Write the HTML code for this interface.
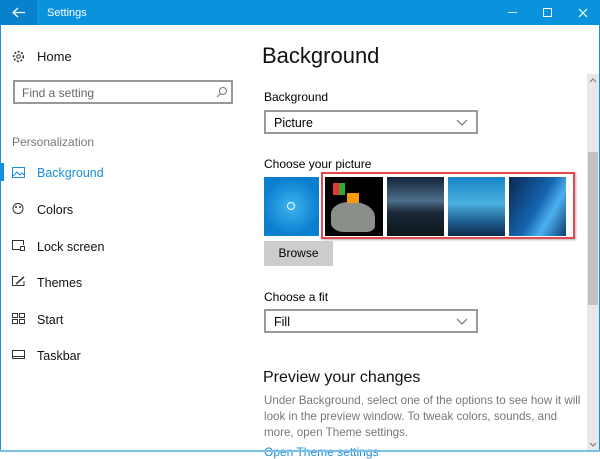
<!DOCTYPE html>
<html><head><meta charset="utf-8"><style>
*{margin:0;padding:0;box-sizing:border-box}
body{width:600px;height:452px;overflow:hidden;background:#fff;font-family:"Liberation Sans",sans-serif;position:relative;color:#000}
.a{position:absolute;white-space:nowrap}
.t{font-size:12px}
.nav{font-size:12.5px;color:#111}
.ic{position:absolute;left:12px;width:13px;height:11px}
.dd{position:absolute;border:2px solid #999;background:#fff;font-size:12.5px;padding:4px 0 0 8px}
.dd svg{position:absolute;right:8px;top:7px}
.th{position:absolute;top:177px;height:59px}
</style></head><body>
<div class="a" style="left:0;top:0;width:600px;height:25px;background:#0b92dc"></div>
<div class="a" style="left:0;top:0;width:37px;height:25px;background:#0781cc"></div>
<svg class="a" style="left:12px;top:7px" width="14" height="11"><path d="M1 5.5H13M6 1L1 5.5L6 10" stroke="#fff" stroke-width="1.3" fill="none"/></svg>
<div class="a" style="left:47px;top:7px;font-size:11px;color:#fff">Settings</div>
<div class="a" style="left:508px;top:12px;width:9px;height:1.3px;background:#cfe8f7"></div>
<div class="a" style="left:543px;top:8px;width:9px;height:9px;border:1.3px solid #fff"></div>
<svg class="a" style="left:578px;top:8px" width="10" height="10"><path d="M1 1L9 9M9 1L1 9" stroke="#fff" stroke-width="1.2"/></svg>
<div class="a" style="left:0;top:25px;width:1px;height:427px;background:#1b8fd6"></div>
<div class="a" style="left:599px;top:25px;width:1px;height:427px;background:#1b8fd6"></div>

<svg class="a" style="left:12px;top:50px" width="13" height="13"><circle cx="6.5" cy="6.5" r="4.8" stroke="#333" stroke-width="1.6" stroke-dasharray="2 1.6" fill="none"/><circle cx="6.5" cy="6.5" r="1.8" stroke="#333" fill="none"/></svg>
<div class="a nav" style="left:37px;top:49px;font-size:13px">Home</div>
<div class="a" style="left:13px;top:80px;width:220px;height:24px;border:2px solid #999"></div>
<div class="a t" style="left:22px;top:86px;color:#666">Find a setting</div>
<svg class="a" style="left:216px;top:86px" width="12" height="12"><circle cx="7" cy="5" r="3.5" stroke="#777" fill="none"/><path d="M4.5 7.5L1 11" stroke="#777"/></svg>
<div class="a t" style="left:12px;top:135px;color:#777">Personalization</div>
<div class="a" style="left:1px;top:163px;width:3px;height:18px;background:#0b92dc"></div>
<svg class="ic" style="top:167px"><rect x=".5" y=".5" width="12" height="10" stroke="#1a8fd6" fill="none"/><path d="M1 9L5 5L8 8L10 6L12 8" stroke="#1a8fd6" fill="none"/></svg>
<div class="a nav" style="left:37px;top:166px;color:#1a8fd6">Background</div>
<svg class="ic" style="top:203px"><circle cx="6" cy="5.5" r="5" stroke="#333" fill="none"/><circle cx="4" cy="4" r="1" fill="#333"/><circle cx="8" cy="4" r="1" fill="#333"/></svg>
<div class="a nav" style="left:37px;top:203px">Colors</div>
<svg class="ic" style="top:240px"><path d="M8 9.5H.5V.5H11.5V5" stroke="#333" fill="none"/><rect x="8.5" y="6.5" width="4" height="4" stroke="#333" fill="none"/></svg>
<div class="a nav" style="left:37px;top:240px">Lock screen</div>
<svg class="ic" style="top:276px"><path d="M6 .5H.5V9.5H12V5" stroke="#333" fill="none"/><path d="M4 8L12 1" stroke="#333" stroke-width="1.5"/></svg>
<div class="a nav" style="left:37px;top:276px">Themes</div>
<svg class="ic" style="top:313px"><rect x=".5" y=".5" width="5" height="4" stroke="#333" fill="none"/><rect x="7.5" y=".5" width="5" height="4" stroke="#333" fill="none"/><rect x=".5" y="6.5" width="5" height="4" stroke="#333" fill="none"/><rect x="7.5" y="6.5" width="5" height="4" stroke="#333" fill="none"/></svg>
<div class="a nav" style="left:37px;top:313px">Start</div>
<svg class="ic" style="top:349px"><rect x=".5" y="1.5" width="12" height="8" stroke="#333" fill="none"/><path d="M1 7.5H12" stroke="#333"/></svg>
<div class="a nav" style="left:37px;top:349px">Taskbar</div>

<div class="a" style="left:262px;top:43px;font-size:22px;color:#111">Background</div>
<div class="a t" style="left:264px;top:90px">Background</div>
<div class="dd" style="left:264px;top:110px;width:214px;height:24px">Picture<svg width="12" height="8"><path d="M1 1L6 6L11 1" stroke="#666" fill="none"/></svg></div>
<div class="a t" style="left:264px;top:157px">Choose your picture</div>
<div class="th" style="left:264px;width:55px;background:radial-gradient(circle at 50% 50%,#3fb4ee,#0a7fcf 70%)"><div class="a" style="left:23px;top:25px;width:8px;height:8px;border-radius:50%;border:1.5px solid #fff"></div></div>
<div class="th" style="left:325px;width:58px;background:#000"><div class="a" style="left:6px;top:25px;width:44px;height:30px;background:#8a8f8a;border-radius:40% 50% 20% 30%"></div><div class="a" style="left:8px;top:6px;width:12px;height:12px;background:linear-gradient(90deg,#e33 50%,#3a3 50%)"></div><div class="a" style="left:22px;top:16px;width:12px;height:10px;background:#f90"></div></div>
<div class="th" style="left:387px;width:57px;background:linear-gradient(#12243a,#4f6f8c 40%,#1b2a38 60%,#0e151c)"></div>
<div class="th" style="left:448px;width:57px;background:linear-gradient(#1584c8,#4ab0dc 45%,#1f5f90 75%,#0d2c4a)"></div>
<div class="th" style="left:509px;width:57px;background:linear-gradient(120deg,#0a2850,#1565b0 50%,#4cb0f0 70%,#0d3c70)"></div>
<div class="a" style="left:321px;top:172px;width:254px;height:67px;border:2px solid #e8474d;box-shadow:1px 1px 2px rgba(0,0,0,.3)"></div>
<div class="a" style="left:264px;top:241px;width:69px;height:25px;background:#ccc;font-size:12px;text-align:center;line-height:25px">Browse</div>
<div class="a t" style="left:264px;top:290px">Choose a fit</div>
<div class="dd" style="left:264px;top:309px;width:214px;height:24px">Fill<svg width="12" height="8"><path d="M1 1L6 6L11 1" stroke="#666" fill="none"/></svg></div>
<div class="a" style="left:263px;top:369px;font-size:16px;color:#111">Preview your changes</div>
<div class="a" style="left:264px;top:393px;color:#777;line-height:16px;font-size:11.6px">Under Background, select one of the options to see how it will<br>look in the preview window. To tweak colors, sounds, and<br>more, open Theme settings.</div>
<div class="a t" style="left:264px;top:445px;color:#1a8fd6">Open Theme settings</div>
<div class="a" style="left:0;top:450px;width:600px;height:2px;background:#7cc0e8"></div>
<div class="a" style="left:587px;top:74px;width:12px;height:376px;background:#e8e8e8"></div>
<div class="a" style="left:588px;top:152px;width:10px;height:153px;background:#c2c2c2"></div>
<svg class="a" style="left:589px;top:78px" width="8" height="5"><path d="M1 4L4 1L7 4" stroke="#777" fill="none"/></svg>
<svg class="a" style="left:589px;top:442px" width="8" height="5"><path d="M1 1L4 4L7 1" stroke="#777" fill="none"/></svg>
</body></html>
